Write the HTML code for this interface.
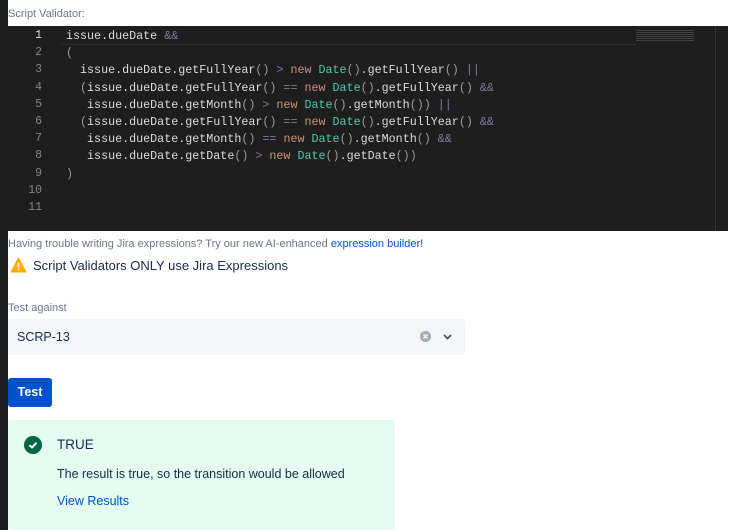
<!DOCTYPE html>
<html><head><style>
body{margin:0;width:749px;height:530px;background:#fff;position:relative;overflow:hidden;font-family:"Liberation Sans",sans-serif}
.strip{position:absolute;left:0;top:0;width:8px;height:530px;background:#1e1f22}
.lbl{position:absolute;left:8px;top:8px;font-size:11px;color:#6b778c}
.ed{position:absolute;left:8px;top:26px;width:720px;height:205px;background:#1e1e1e}
.ln{position:absolute;left:8px;width:34px;text-align:right;font-family:"Liberation Mono",monospace;font-size:11.5px;color:#858585}
.cl{position:absolute;left:66px;font-family:"Liberation Mono",monospace;font-size:11.7px;color:#dcdcdc;white-space:pre}
.k{color:#ce9178}.c{color:#4ec9b0}.o{color:#7a7f9a}.p{color:#9a9a9a}
.mm{position:absolute;left:636px;top:30px;width:58px;height:11px;background:repeating-linear-gradient(#666 0 1px,#1e1e1e 1px 2px);opacity:.5}
.sb{position:absolute;left:715px;top:26px;width:1px;height:205px;background:#333}
</style></head><body>
<div class="strip"></div>
<div class="lbl">Script Validator:</div>
<div class="ed"></div>
<div style="position:absolute;left:60px;top:44px;width:576px;height:1px;background:#2c2c2c"></div>
<div class="mm"></div><div class="sb"></div>
<div class="ln" style="top:29px;color:#ddd">1</div>
<div class="ln" style="top:46px">2</div>
<div class="ln" style="top:63px">3</div>
<div class="ln" style="top:81px">4</div>
<div class="ln" style="top:98px">5</div>
<div class="ln" style="top:115px">6</div>
<div class="ln" style="top:132px">7</div>
<div class="ln" style="top:149px">8</div>
<div class="ln" style="top:167px">9</div>
<div class="ln" style="top:184px">10</div>
<div class="ln" style="top:201px">11</div>
<div class="cl" style="top:29px">issue.dueDate <span class="o">&amp;&amp;</span></div>
<div class="cl" style="top:46px"><span class="p">(</span></div>
<div class="cl" style="top:63px">  issue.dueDate.getFullYear<span class="p">()</span> <span class="o">&gt;</span> <span class="k">new</span> <span class="c">Date</span><span class="p">()</span>.getFullYear<span class="p">()</span> <span class="o">||</span></div>
<div class="cl" style="top:81px">  <span class="p">(</span>issue.dueDate.getFullYear<span class="p">()</span> <span class="o">==</span> <span class="k">new</span> <span class="c">Date</span><span class="p">()</span>.getFullYear<span class="p">()</span> <span class="o">&amp;&amp;</span></div>
<div class="cl" style="top:98px">   issue.dueDate.getMonth<span class="p">()</span> <span class="o">&gt;</span> <span class="k">new</span> <span class="c">Date</span><span class="p">()</span>.getMonth<span class="p">())</span> <span class="o">||</span></div>
<div class="cl" style="top:115px">  <span class="p">(</span>issue.dueDate.getFullYear<span class="p">()</span> <span class="o">==</span> <span class="k">new</span> <span class="c">Date</span><span class="p">()</span>.getFullYear<span class="p">()</span> <span class="o">&amp;&amp;</span></div>
<div class="cl" style="top:132px">   issue.dueDate.getMonth<span class="p">()</span> <span class="o">==</span> <span class="k">new</span> <span class="c">Date</span><span class="p">()</span>.getMonth<span class="p">()</span> <span class="o">&amp;&amp;</span></div>
<div class="cl" style="top:149px">   issue.dueDate.getDate<span class="p">()</span> <span class="o">&gt;</span> <span class="k">new</span> <span class="c">Date</span><span class="p">()</span>.getDate<span class="p">())</span></div>
<div class="cl" style="top:167px"><span class="p">)</span></div>
<div style="position:absolute;left:8px;top:238px;font-size:11px;color:#6b778c">Having trouble writing Jira expressions? Try our new AI-enhanced <span style="color:#0052cc">expression builder!</span></div>
<svg style="position:absolute;left:10px;top:257px" width="17" height="16" viewBox="0 0 17 16"><path d="M8.5 1 L16 15 H1 Z" fill="#ffab00" stroke="#ffab00" stroke-linejoin="round"/><rect x="7.7" y="5.5" width="1.6" height="5" fill="#fff"/><rect x="7.7" y="11.5" width="1.6" height="1.6" fill="#fff"/></svg>
<div style="position:absolute;left:33px;top:258px;font-size:13px;color:#172b4d">Script Validators ONLY use Jira Expressions</div>
<div style="position:absolute;left:8px;top:302px;font-size:11px;color:#6b778c">Test against</div>
<div style="position:absolute;left:8px;top:319px;width:457px;height:36px;background:#f4f5f7;border-radius:3px"></div>
<div style="position:absolute;left:17px;top:330px;font-size:12.5px;color:#172b4d">SCRP-13</div>
<svg style="position:absolute;left:420px;top:331px" width="11" height="11" viewBox="0 0 11 11"><circle cx="5.5" cy="5.5" r="5.5" fill="#a5adba"/><path d="M3.5 3.5 L7.5 7.5 M7.5 3.5 L3.5 7.5" stroke="#f4f5f7" stroke-width="1.5"/></svg>
<svg style="position:absolute;left:443px;top:334px" width="9" height="6" viewBox="0 0 9 6"><path d="M1 1 L4.5 4.5 L8 1" stroke="#42526e" stroke-width="1.8" fill="none"/></svg>
<div style="position:absolute;left:8px;top:378px;width:44px;height:29px;background:#0052cc;border-radius:3px;color:#fff;font-size:12.5px;font-weight:bold;text-align:center;line-height:29px">Test</div>
<div style="position:absolute;left:8px;top:420px;width:387px;height:110px;background:#e3fcef;border-radius:3px"></div>
<svg style="position:absolute;left:24px;top:436px" width="18" height="18" viewBox="0 0 18 18"><circle cx="9" cy="9" r="9" fill="#006644"/><path d="M5.5 9.2 L8 11.5 L12.5 6.8" stroke="#fff" stroke-width="2" fill="none"/></svg>
<div style="position:absolute;left:57px;top:437px;font-size:13.5px;color:#172b4d">TRUE</div>
<div style="position:absolute;left:57px;top:467px;font-size:12.5px;color:#172b4d">The result is true, so the transition would be allowed</div>
<div style="position:absolute;left:57px;top:494px;font-size:12.5px;color:#0052cc">View Results</div>
</body></html>
